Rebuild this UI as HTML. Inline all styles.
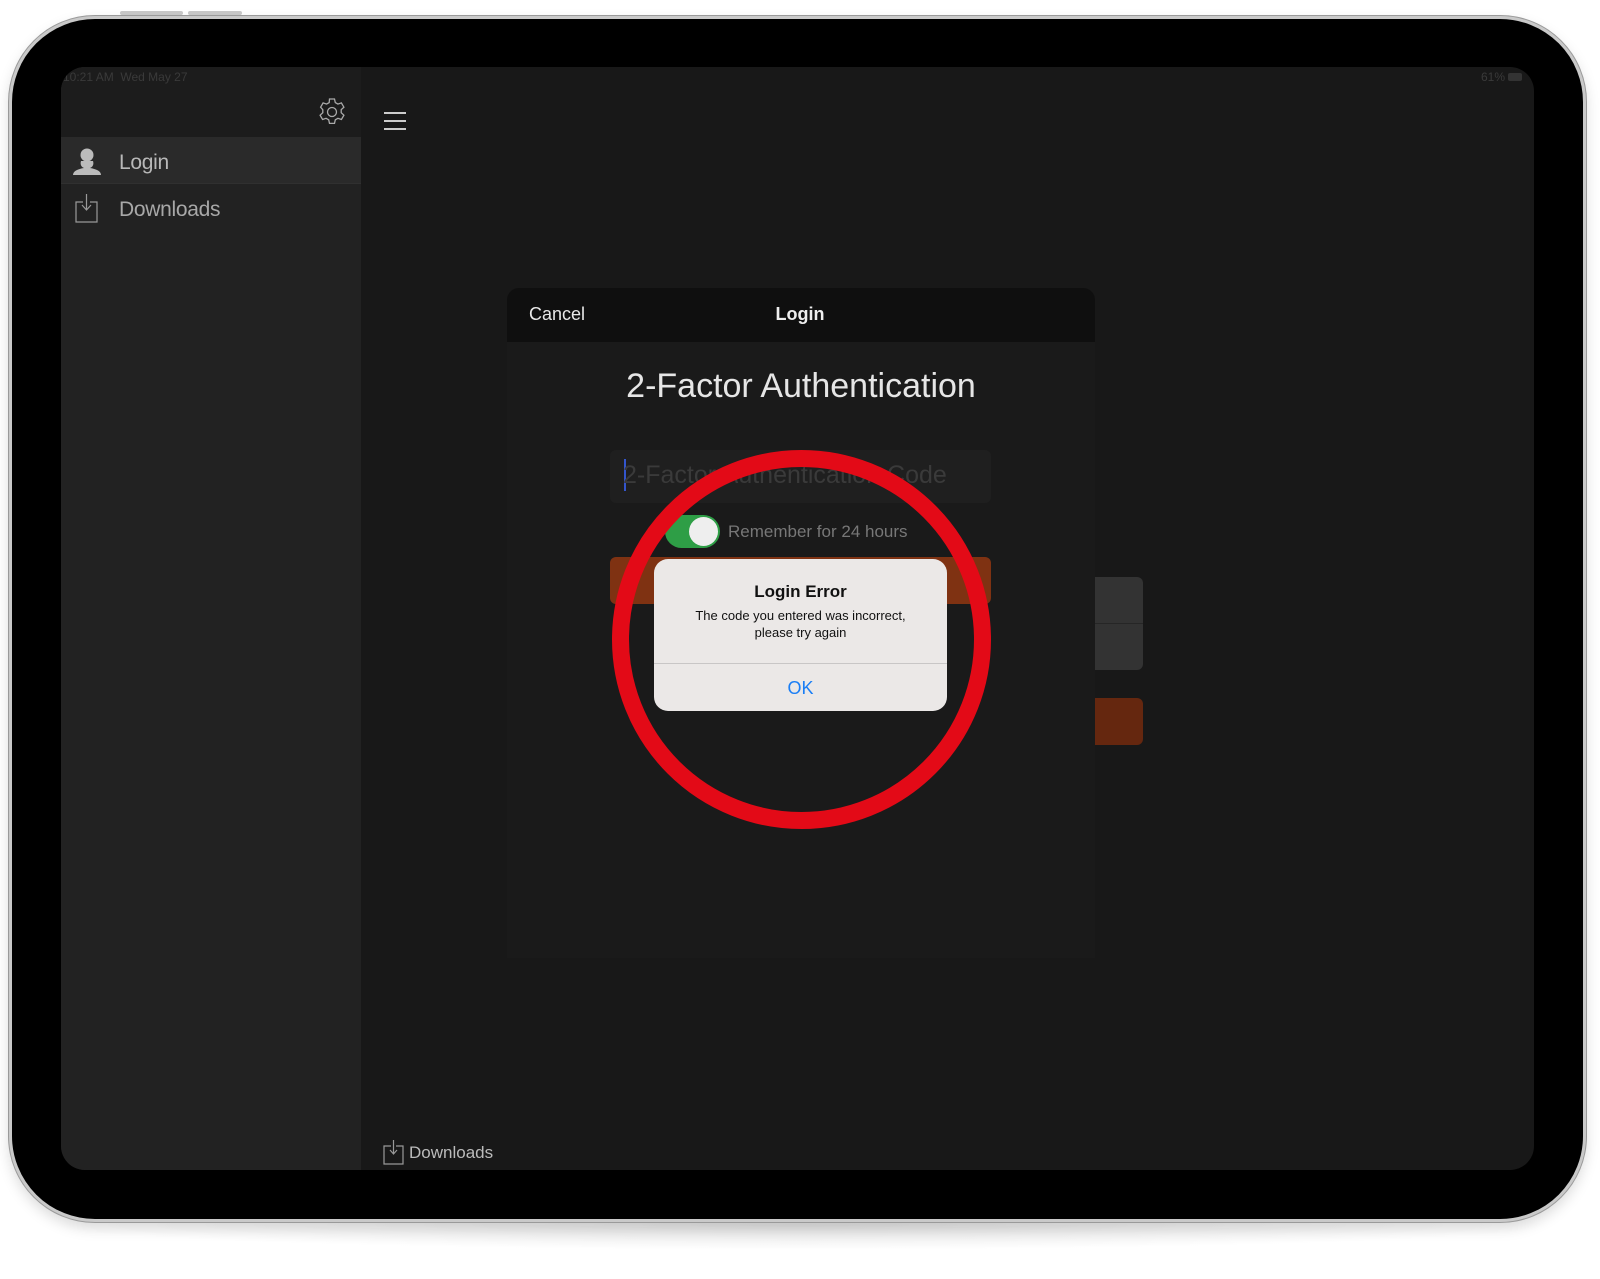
<!DOCTYPE html>
<html><head><meta charset="utf-8"><style>
*{margin:0;padding:0;box-sizing:border-box}
body{width:1600px;height:1279px;background:#fff;position:relative;overflow:hidden;font-family:"Liberation Sans",sans-serif}
.abs{position:absolute}
#shadow{left:40px;top:1200px;width:1520px;height:50px;border-radius:50%;background:radial-gradient(ellipse at center,rgba(0,0,0,.12),rgba(0,0,0,0) 70%)}
#dev{left:9px;top:16px;width:1577px;height:1206px;border-radius:86px;background:#000;border:3px solid #c9c9c9;box-shadow:0 0 0 1px #9a9a9a,0 6px 14px rgba(0,0,0,.15)}
#screen{left:61px;top:67px;width:1473px;height:1103px;border-radius:24px;background:#181818;overflow:hidden}
#side{left:0;top:0;width:300px;height:1103px;background:#222}
.btn{height:4px;background:#c9c9c9;border-radius:2px;top:11px}
</style></head><body>
<div class="abs" id="shadow"></div>
<div class="abs btn" style="left:120px;width:63px"></div>
<div class="abs btn" style="left:188px;width:54px"></div>
<div class="abs" id="dev"></div>
<div class="abs" id="screen">
 <div class="abs" id="side">
  <div class="abs" style="left:0;top:0;width:300px;height:70px;background:#1c1c1c"></div>
  <div class="abs" style="left:0;top:70px;width:300px;height:47px;background:#2a2a2a;border-bottom:1px solid #303030"></div>
  <svg class="abs" style="left:255px;top:29px" width="32" height="32" viewBox="0 0 32 32" fill="none" stroke="#aaa" stroke-width="1.3"><path d="M13.5 3h5l.8 3.6 2.6 1.5 3.5-1.2 2.5 4.3-2.7 2.5v3l2.7 2.5-2.5 4.3-3.5-1.2-2.6 1.5-.8 3.6h-5l-.8-3.6-2.6-1.5-3.5 1.2-2.5-4.3 2.7-2.5v-3L4.6 11.2l2.5-4.3 3.5 1.2 2.6-1.5z"/><circle cx="16" cy="16" r="4.5"/></svg>
  <svg class="abs" style="left:9px;top:79px" width="34" height="30" viewBox="0 0 34 30"><circle cx="17" cy="9" r="6.5" fill="#bbb"/><path d="M11 15c-1 3 0 6 3 7-6 1-11 3-11 7h28c0-4-5-6-11-7 3-1 4-4 3-7z" fill="#bbb"/></svg>
  <div class="abs" style="left:58px;top:84px;color:#b8b8b8;font-size:21px;letter-spacing:-0.3px">Login</div>
  <svg class="abs" style="left:13px;top:125px" width="26" height="32" viewBox="0 0 26 32" fill="none" stroke="#999" stroke-width="1.2"><path d="M9 10H2v20h21V10h-7M12.5 2v16M8 13l4.5 5 4.5-5"/></svg>
  <div class="abs" style="left:58px;top:131px;color:#a8a8a8;font-size:21px;letter-spacing:-0.3px">Downloads</div>
  <div class="abs" style="left:2px;top:3px;color:#3a3a3a;font-size:12px">10:21 AM&nbsp;&nbsp;Wed May 27</div>
 </div>
 <div class="abs" style="left:1420px;top:3px;color:#3a3a3a;font-size:12px">61% <span style="display:inline-block;width:14px;height:8px;background:#333;border-radius:2px"></span></div>
 <div class="abs" style="left:323px;top:45px;width:22px">
  <div style="height:2px;background:#ccc;margin-bottom:6px"></div><div style="height:2px;background:#ccc;margin-bottom:6px"></div><div style="height:2px;background:#ccc"></div></div>
 <!-- modal -->
 <div class="abs" style="left:446px;top:221px;width:588px;height:670px;background:#1a1a1a;border-radius:12px 12px 0 0"></div>
 <div class="abs" style="left:446px;top:221px;width:588px;height:54px;background:#0f0f0f;border-radius:12px 12px 0 0"></div>
 <div class="abs" style="left:468px;top:237px;color:#e8e8e8;font-size:18px">Cancel</div>
 <div class="abs" style="left:639px;top:237px;width:200px;text-align:center;color:#eee;font-size:18px;font-weight:bold">Login</div>
 <div class="abs" style="left:446px;top:300px;width:588px;text-align:center;color:#e6e6e6;font-size:34px">2-Factor Authentication</div>
 <div class="abs" style="left:549px;top:383px;width:381px;height:53px;background:#1f1f1f;border-radius:6px"></div>
 <div class="abs" style="left:563px;top:392px;width:2px;height:32px;background:#3355cc"></div>
 <div class="abs" style="left:562px;top:394px;color:#3a3a3a;font-size:25px">2-Factor Authentication Code</div>
 <div class="abs" style="left:604px;top:448px;width:55px;height:33px;background:#2e9e46;border-radius:17px"></div>
 <div class="abs" style="left:628px;top:450px;width:29px;height:29px;background:#eee;border-radius:50%"></div>
 <div class="abs" style="left:667px;top:455px;color:#777;font-size:17px">Remember for 24 hours</div>
 <div class="abs" style="left:549px;top:490px;width:381px;height:47px;background:#7f3212;border-radius:6px"></div>
 <div class="abs" style="left:1034px;top:510px;width:48px;height:93px;background:#333;border-radius:0 6px 6px 0;border-top:0"></div>
 <div class="abs" style="left:1034px;top:556px;width:48px;height:1px;background:#262626"></div>
 <div class="abs" style="left:1034px;top:631px;width:48px;height:47px;background:#65270f;border-radius:0 6px 6px 0"></div>
 <!-- alert -->
 <div class="abs" style="left:593px;top:492px;width:293px;height:152px;background:#ebe8e7;border-radius:14px;text-align:center">
  <div style="margin-top:23px;font-size:17px;font-weight:bold;color:#111">Login Error</div>
  <div style="margin-top:5px;font-size:13px;line-height:17px;color:#111">The code you entered was incorrect,<br>please try again</div>
  <div class="abs" style="left:0;top:104px;width:293px;height:1px;background:#c8c6c6"></div>
  <div class="abs" style="left:0;top:119px;width:293px;font-size:18px;color:#1a7ef5">OK</div>
 </div>
 <div class="abs" style="left:551px;top:383px;width:379px;height:379px;border-radius:50%;border:17px solid #e30a17"></div>
 <svg class="abs" style="left:322px;top:1072px" width="22" height="26" viewBox="0 0 22 26" fill="none" stroke="#999" stroke-width="1.2"><path d="M8 7H1v18h19V7h-7M10.5 1v14M7 11l3.5 4 3.5-4"/></svg>
 <div class="abs" style="left:348px;top:1076px;color:#bbb;font-size:17px">Downloads</div>
</div>
</body></html>
